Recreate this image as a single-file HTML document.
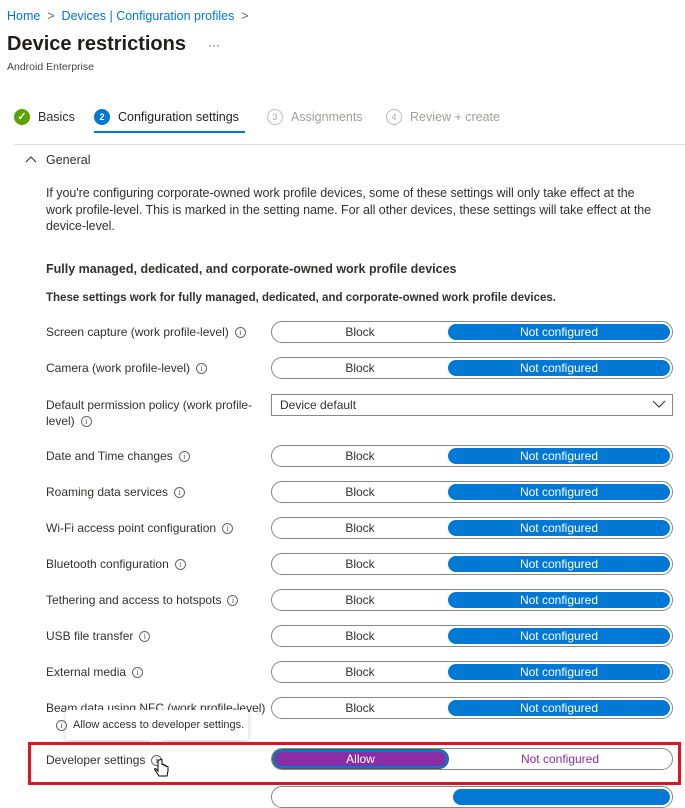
<!DOCTYPE html>
<html><head><meta charset="utf-8"><style>
*{margin:0;padding:0;box-sizing:border-box}
body{width:685px;height:789px;overflow:hidden;background:#fff;font-family:"Segoe UI","Liberation Sans",sans-serif;color:#323130;position:relative;font-size:12.5px}
.a{position:absolute;white-space:nowrap}
.lbl{position:absolute;left:46px;font-size:12px;color:#323130}
.i{display:inline-block;width:11px;height:11px;border:1px solid #666;border-radius:50%;font-size:8px;line-height:9px;text-align:center;color:#555;vertical-align:middle;margin-left:6px;font-family:"Liberation Serif",serif}
.tg{position:absolute;left:271px;width:402px;height:22px;border:1px solid #8a8886;border-radius:11px;font-size:12px}
.tg .b{position:absolute;left:0;width:176px;top:2px;text-align:center;line-height:16px;color:#323130}
.tg .n{position:absolute;left:176px;right:2px;top:2px;height:16px;background:#0078d4;border-radius:8px;color:#fff;text-align:center;line-height:16px}
</style></head><body>
<div class="a" style="left:7px;top:9px;font-size:12.5px;color:#0078d4">Home <span style="color:#666">&nbsp;&gt;&nbsp;</span> Devices | Configuration profiles <span style="color:#666">&nbsp;&gt;</span></div>
<div class="a" style="left:7px;top:33px;font-size:20px;font-weight:600;color:#201f1e">Device restrictions</div>
<div class="a" style="left:208px;top:38px;font-size:12px;color:#444">···</div>
<div class="a" style="left:7px;top:61px;font-size:10.5px;color:#444">Android Enterprise</div>

<div class="a" style="left:14px;top:109px;width:16px;height:16px;border-radius:50%;background:#57a300;color:#fff;font-size:11px;text-align:center;line-height:16px;font-weight:bold">✓</div>
<div class="a" style="left:38px;top:110px;font-size:12.5px">Basics</div>
<div class="a" style="left:94px;top:109px;width:16px;height:16px;border-radius:50%;background:#0078d4;color:#fff;font-size:9px;text-align:center;line-height:16px;font-weight:bold">2</div>
<div class="a" style="left:118px;top:110px;font-size:12.5px;color:#201f1e">Configuration settings</div>
<div class="a" style="left:94px;top:131px;width:151px;height:2px;background:#0078d4"></div>
<div class="a" style="left:267px;top:109px;width:16px;height:16px;border-radius:50%;border:1px solid #bbb;color:#aaa;font-size:9px;text-align:center;line-height:14px">3</div>
<div class="a" style="left:291px;top:110px;font-size:12.5px;color:#a19f9d">Assignments</div>
<div class="a" style="left:386px;top:109px;width:16px;height:16px;border-radius:50%;border:1px solid #bbb;color:#aaa;font-size:9px;text-align:center;line-height:14px">4</div>
<div class="a" style="left:410px;top:110px;font-size:12.5px;color:#a19f9d">Review + create</div>
<div class="a" style="left:14px;top:144px;width:671px;height:1px;background:#ddd"></div>

<svg class="a" style="left:25px;top:155px" width="12" height="10"><path d="M1 7 L6 2 L11 7" stroke="#444" fill="none" stroke-width="1.2"/></svg>
<div class="a" style="left:46px;top:153px;font-size:12.5px">General</div>

<div class="a" style="left:46px;top:185px;font-size:12.5px;letter-spacing:-0.05px;line-height:16.5px">If you're configuring corporate-owned work profile devices, some of these settings will only take effect at the<br>work profile-level. This is marked in the setting name. For all other devices, these settings will take effect at the<br>device-level.</div>
<div class="a" style="left:46px;top:262px;font-size:12.5px;font-weight:600">Fully managed, dedicated, and corporate-owned work profile devices</div>
<div class="a" style="left:46px;top:292px;font-size:11.5px;font-weight:600">These settings work for fully managed, dedicated, and corporate-owned work profile devices.</div>

<div class="lbl" style="top:325px">Screen capture (work profile-level)<span class="i">i</span></div>
<div class="tg" style="top:321px"><div class="b">Block</div><div class="n">Not configured</div></div>
<div class="lbl" style="top:361px">Camera (work profile-level)<span class="i">i</span></div>
<div class="tg" style="top:357px"><div class="b">Block</div><div class="n">Not configured</div></div>
<div class="lbl" style="top:397px;line-height:16px">Default permission policy (work profile-<br>level)<span class="i">i</span></div>
<div class="a" style="left:271px;top:394px;width:402px;height:22px;border:1px solid #8a8886;font-size:12px;line-height:20px;padding-left:8px">Device default</div>
<svg class="a" style="left:652px;top:400px" width="14" height="9"><path d="M1 1 L7 7 L13 1" stroke="#444" fill="none" stroke-width="1.2"/></svg>

<div class="lbl" style="top:449px">Date and Time changes<span class="i">i</span></div>
<div class="tg" style="top:445px"><div class="b">Block</div><div class="n">Not configured</div></div>
<div class="lbl" style="top:485px">Roaming data services<span class="i">i</span></div>
<div class="tg" style="top:481px"><div class="b">Block</div><div class="n">Not configured</div></div>
<div class="lbl" style="top:521px">Wi-Fi access point configuration<span class="i">i</span></div>
<div class="tg" style="top:517px"><div class="b">Block</div><div class="n">Not configured</div></div>
<div class="lbl" style="top:557px">Bluetooth configuration<span class="i">i</span></div>
<div class="tg" style="top:553px"><div class="b">Block</div><div class="n">Not configured</div></div>
<div class="lbl" style="top:593px">Tethering and access to hotspots<span class="i">i</span></div>
<div class="tg" style="top:589px"><div class="b">Block</div><div class="n">Not configured</div></div>
<div class="lbl" style="top:629px">USB file transfer<span class="i">i</span></div>
<div class="tg" style="top:625px"><div class="b">Block</div><div class="n">Not configured</div></div>
<div class="lbl" style="top:665px">External media<span class="i">i</span></div>
<div class="tg" style="top:661px"><div class="b">Block</div><div class="n">Not configured</div></div>
<div class="lbl" style="top:701px">Beam data using NFC (work profile-level)</div>
<div class="tg" style="top:697px"><div class="b">Block</div><div class="n">Not configured</div></div>

<div class="a" style="left:66px;top:710px;width:182px;height:30px;background:#fff;box-shadow:0 2px 6px rgba(0,0,0,.18)"></div>
<div class="a" style="left:150px;top:735px;width:10px;height:10px;background:#fff;transform:rotate(45deg);box-shadow:2px 2px 3px rgba(0,0,0,.1)"></div>
<div class="a" style="left:56px;top:719px;font-size:11px"><span class="i" style="margin:0 6px 0 0">i</span>Allow access to developer settings.</div>

<div class="tg" style="top:786px"><div class="n" style="left:181px"></div></div>
<div class="a" style="left:28px;top:742px;width:653px;height:43px;border:3px solid #e81123;background:#fff"></div>
<div class="lbl" style="top:753px">Developer settings<span class="i">i</span></div>
<svg class="a" style="left:153px;top:758px" width="18" height="22"><path d="M5 2 v11 l-2-2 c-1-1-2 0-1 1 l4 6 h8 l1-5 v-4 c0-1-2-1-2 0 v-1 c0-1-2-1-2 0 v-1 c0-1-2-1-2 0 v-5 c0-1-2-1-2 0z" fill="#fff" stroke="#000" stroke-width="1"/></svg>
<div class="tg" style="top:748px"><div style="position:absolute;left:1px;top:1px;width:175px;height:18px;border-radius:9px;border:2px solid #0078d4;background:#8a2da5;color:#fff;text-align:center;line-height:14px;box-shadow:0 0 0 1px #555">Allow</div><div style="position:absolute;left:176px;right:0;top:2px;text-align:center;line-height:16px;color:#8a2da5">Not configured</div></div>
</body></html>
